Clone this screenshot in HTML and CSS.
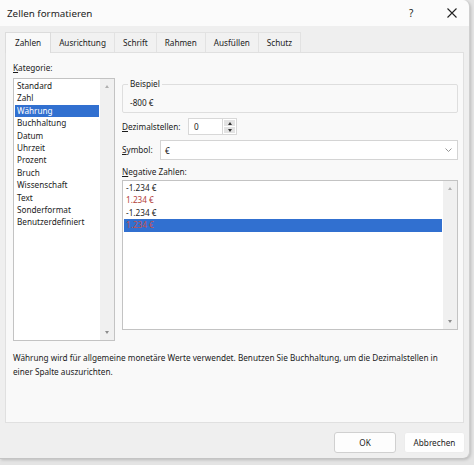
FILE: index.html
```html
<!DOCTYPE html>
<html lang="de">
<head>
<meta charset="utf-8">
<title>Zellen formatieren</title>
<link rel="stylesheet" href="styles.css">
</head>
<body>
<div class="dialog">
  <div class="titlebar">
    <span class="title">Zellen formatieren</span>
    <span class="help">?</span>
    <span class="close"><svg width="10" height="10" viewBox="0 0 10 10"><path d="M0.5 0.5 L9.5 9.5 M9.5 0.5 L0.5 9.5" stroke="#222" stroke-width="1.1" fill="none"/></svg></span>
  </div>
  <div class="tabs">
    <div class="tab active">Zahlen</div>
    <div class="tab">Ausrichtung</div>
    <div class="tab">Schrift</div>
    <div class="tab">Rahmen</div>
    <div class="tab">Ausfüllen</div>
    <div class="tab">Schutz</div>
  </div>
  <div class="panel">
    <div class="cols">
      <div class="left">
        <div class="label"><u>K</u>ategorie:</div>
        <div class="listbox cat">
          <ul class="items">
            <li>Standard</li>
            <li>Zahl</li>
            <li class="sel">Währung</li>
            <li>Buchhaltung</li>
            <li>Datum</li>
            <li>Uhrzeit</li>
            <li>Prozent</li>
            <li>Bruch</li>
            <li>Wissenschaft</li>
            <li>Text</li>
            <li>Sonderformat</li>
            <li>Benutzerdefiniert</li>
          </ul>
          <div class="vscroll"><span class="arr up"></span><span class="arr down"></span></div>
        </div>
      </div>
      <div class="right">
        <fieldset class="sample">
          <legend>Beispiel</legend>
          <div class="sample-value">-800 €</div>
        </fieldset>
        <div class="row dec">
          <span class="label dec-label"><u>D</u>ezimalstellen:</span>
          <div class="spin-input">0</div>
          <div class="spin-btns"><span class="sb"><span class="tri up"></span></span><span class="sb"><span class="tri down"></span></span></div>
        </div>
        <div class="row sym">
          <span class="label sym-label"><u>S</u>ymbol:</span>
          <div class="select">
            <span>€</span>
            <svg class="chev" width="7" height="4" viewBox="0 0 7 4"><path d="M0.5 0.5 L3.5 3.5 L6.5 0.5" stroke="#8a8a8a" stroke-width="0.9" fill="none"/></svg>
          </div>
        </div>
        <div class="label neg-label"><u>N</u>egative Zahlen:</div>
        <div class="listbox neg">
          <ul class="items">
            <li>-1.234 €</li>
            <li class="red">1.234 €</li>
            <li>-1.234 €</li>
            <li class="sel red">1.234 €</li>
          </ul>
          <div class="vscroll"><span class="arr up"></span><span class="arr down"></span></div>
        </div>
      </div>
    </div>
    <p class="desc">Währung wird für allgemeine monetäre Werte verwendet. Benutzen Sie Buchhaltung, um die Dezimalstellen in<br>einer Spalte auszurichten.</p>
  </div>
  <div class="footer">
    <button class="btn ok">OK</button>
    <button class="btn cancel">Abbrechen</button>
  </div>
</div>
</body>
</html>
```
FILE: styles.css
```css
* { box-sizing: border-box; }
html, body { margin: 0; padding: 0; }
body {
  width: 474px;
  height: 465px;
  background: #e4e4e4;
  font-family: "Noto Sans", "Open Sans", sans-serif;
  font-size: 8.2px;
  color: #1b1b1b;
  overflow: hidden;
}
.dialog {
  width: 470px;
  height: 459px;
  background: #efefef;
  border-radius: 0 7px 7px 0;
  border-right: 1px solid #cfcfcf;
  border-bottom: 1px solid #c4c4c4;
  box-shadow: 1px 1px 3px rgba(0,0,0,0.18);
  display: flex;
  flex-direction: column;
  overflow: hidden;
}
.titlebar {
  height: 26px;
  background: #fbfbfb;
  display: flex;
  align-items: center;
  padding-left: 7px;
}
.title { font-size: 9.8px; flex: 1; }
.help { font-size: 10px; width: 38px; text-align: left; }
.close { width: 22px; display: flex; align-items: center; }
.tabs {
  display: flex;
  margin: 6px 0 0 5px;
  height: 20px;
  position: relative;
  z-index: 1;
}
.tab {
  height: 20px;
  line-height: 20px;
  padding: 0 8px;
  background: #f1f1f1;
  border-top: 1px solid #e2e2e2;
  border-right: 1px solid #e2e2e2;
}
.tab.active {
  background: #f9f9f9;
  border: 1px solid #dcdcdc;
  border-bottom: none;
  height: 21px;
  padding: 0 9px;
}
.panel {
  margin: 0 5px 0 5px;
  height: 371px;
  background: #f9f9f9;
  border: 1px solid #e0e0e0;
  padding: 9px 6px 0 7px;
}
.cols {
  display: grid;
  grid-template-columns: 102px 336px;
  column-gap: 7px;
}
.label { line-height: 12px; height: 12px; }
.left .label { margin-bottom: 4px; }
.listbox {
  background: #fff;
  border: 1px solid #c3c3c3;
  display: flex;
}
.listbox.cat { height: 263px; }
.listbox.neg { height: 150px; margin-top: 2px; }
.items {
  list-style: none;
  margin: 0;
  padding: 1px 1px 0 1px;
  flex: 1;
}
.items li {
  line-height: 12.4px;
  height: 12.4px;
  padding-left: 2px;
  white-space: nowrap;
}
.items li.sel { background: #3170d0; color: #fff; }
.items li.red { color: #b3423b; }
.items li.sel.red { color: #c9514b; }
.vscroll {
  width: 14px;
  background: #f0f0f0;
  display: flex;
  flex-direction: column;
  justify-content: space-between;
  align-items: center;
  padding: 6px 0 6px;
}
.arr { width: 0; height: 0; border-left: 2.5px solid transparent; border-right: 2.5px solid transparent; }
.arr.up { border-bottom: 3px solid #b0b0b0; }
.arr.down { border-top: 3px solid #8c8c8c; }
.right { padding-top: 16px; }
.sample {
  margin: 0;
  padding: 0 0 3px 7px;
  border: 1px solid #dedede;
  border-radius: 2px;
  height: 35px;
}
.sample legend {
  padding: 0 2px;
  margin-left: -2px;
  line-height: 12px;
}
.sample-value { line-height: 12px; margin-top: 7px; }
.row { display: flex; align-items: center; }
.dec { margin-top: 5px; height: 17px; }
.dec-label { width: 66px; }
.spin-input {
  width: 34px;
  height: 17px;
  background: #fff;
  border: 1px solid #d8d8d8;
  border-right: none;
  line-height: 15px;
  padding-left: 5px;
}
.spin-btns {
  width: 15px;
  height: 17px;
  display: flex;
  flex-direction: column;
  gap: 1px;
  background: #fff;
  border: 1px solid #d8d8d8;
  padding: 1px;
}
.sb {
  flex: 1;
  background: #e3e3e3;
  display: flex;
  align-items: center;
  justify-content: center;
}
.tri { width: 0; height: 0; border-left: 2.5px solid transparent; border-right: 2.5px solid transparent; }
.tri.up { border-bottom: 3px solid #333; }
.tri.down { border-top: 3px solid #333; }
.sym { margin-top: 5px; height: 20px; }
.sym-label { width: 38px; }
.select {
  flex: 1;
  height: 20px;
  background: #fff;
  border: 1px solid #d4d4d4;
  display: flex;
  align-items: center;
  justify-content: space-between;
  padding: 0 5px 0 4px;
}
.neg-label { margin-top: 6px; }
.desc {
  margin: 10px 0 0 0;
  line-height: 14px;
  white-space: nowrap;
}
.footer {
  flex: 1;
  display: flex;
  justify-content: flex-end;
  align-items: flex-start;
  padding: 9px 4px 0 0;
  gap: 8px;
}
.btn {
  font-family: inherit;
  font-size: 8.2px;
  color: #1b1b1b;
  height: 21px;
  border-radius: 3px;
  background: #fdfdfd;
  border: 1px solid #d0d0d0;
  padding: 0;
}
.btn.ok { width: 62px; }
.btn.cancel { width: 61px; border-color: #ececec; background: #fefefe; }
```
